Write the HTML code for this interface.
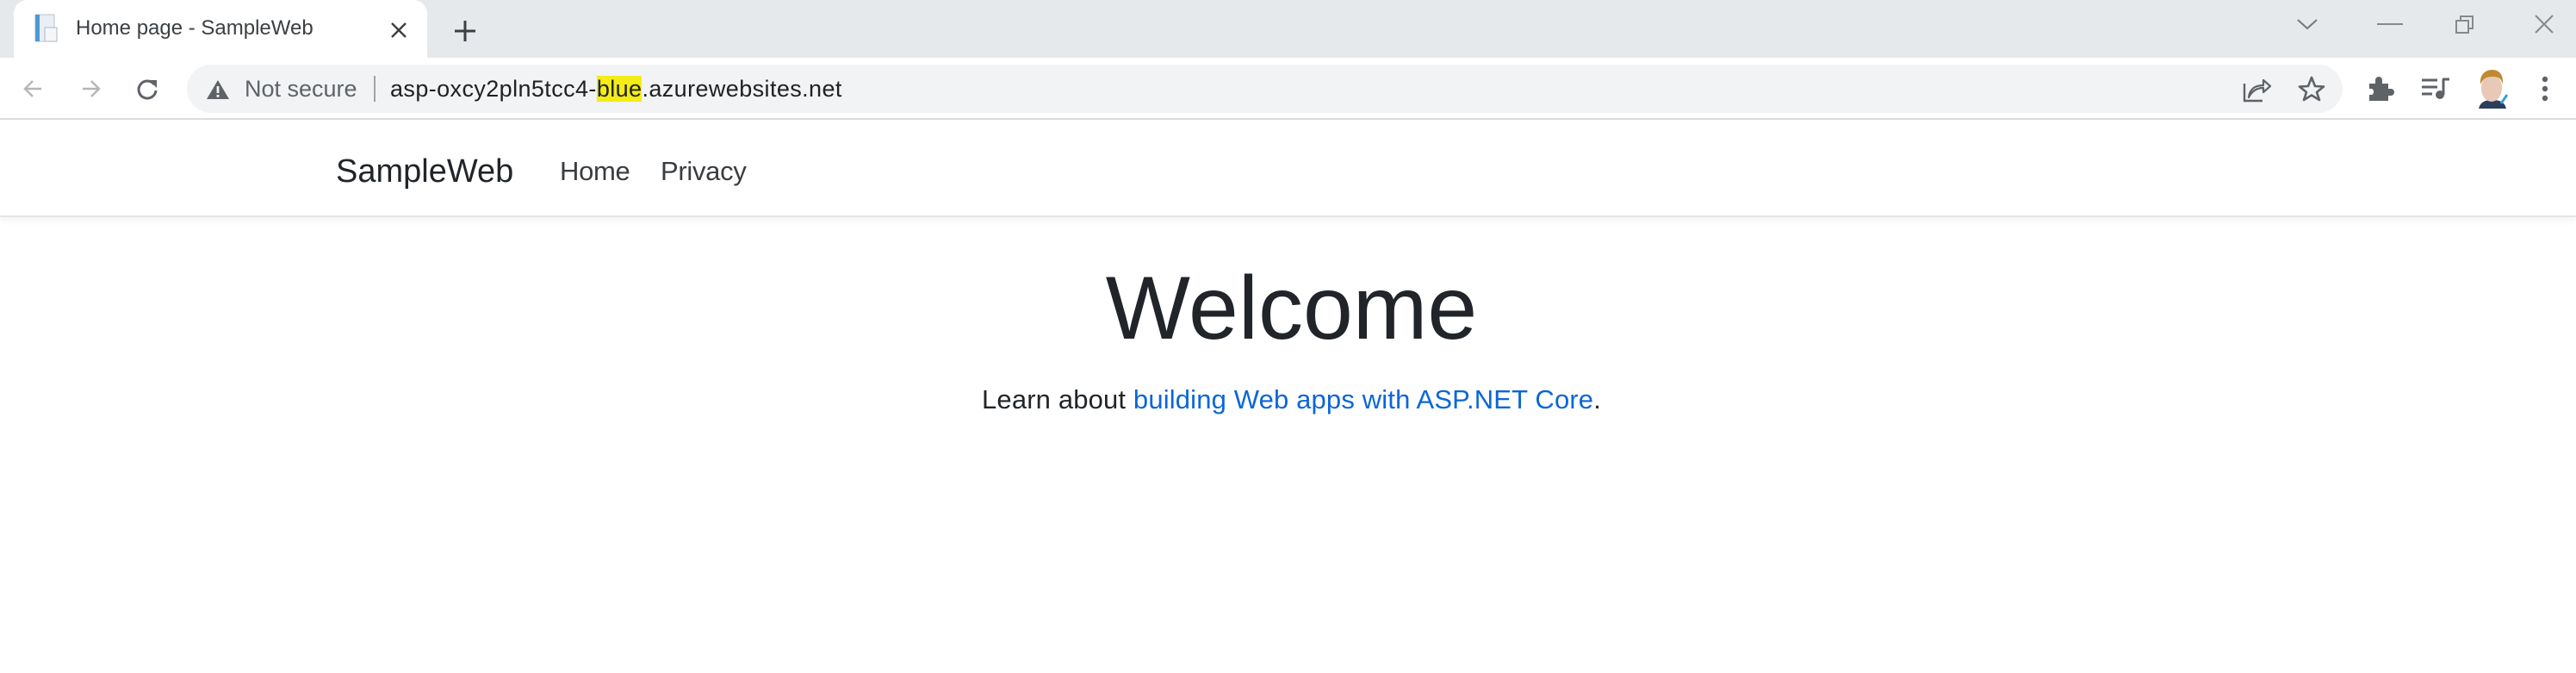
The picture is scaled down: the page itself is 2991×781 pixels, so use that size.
<!DOCTYPE html>
<html><head><meta charset="utf-8"><style>
*{margin:0;padding:0;box-sizing:border-box}
body{width:2991px;height:781px;background:#fff;font-family:"Liberation Sans",sans-serif;position:relative;overflow:hidden}
.abs{position:absolute}
.t{position:absolute;white-space:nowrap;line-height:1}
</style></head><body>
<!-- tab bar -->
<div class="abs" style="left:0;top:0;width:2991px;height:67px;background:#e6e9ec"></div>
<div class="abs" style="left:16px;top:0;width:480px;height:67px;background:#fff;border-radius:16px 16px 0 0"></div>
<svg class="abs" style="left:38px;top:16px" width="34" height="34" viewBox="0 0 34 34">
<rect x="3" y="1" width="22" height="31" fill="#e8eef4" stroke="#b8c4d0"/>
<rect x="3" y="1" width="5" height="31" fill="#4a9ad8"/>
<rect x="14" y="16" width="14" height="16" fill="#f4f6f8" stroke="#b0b8c0"/>
</svg>
<div class="t" style="left:88px;top:21px;font-size:24px;color:#3c4043">Home page - SampleWeb</div>
<svg class="abs" style="left:452px;top:24px" width="22" height="22" viewBox="0 0 22 22"><path d="M3 3L19 19M19 3L3 19" stroke="#3c4043" stroke-width="2.4"/></svg>
<svg class="abs" style="left:526px;top:22px" width="28" height="28" viewBox="0 0 28 28"><path d="M14 2V26M2 14H26" stroke="#3c4043" stroke-width="3"/></svg>
<svg class="abs" style="left:2666px;top:20px" width="26" height="16" viewBox="0 0 26 16"><path d="M2 3L13 13L24 3" fill="none" stroke="#777" stroke-width="2"/></svg>
<div class="abs" style="left:2760px;top:27px;width:30px;height:2px;background:#888"></div>
<svg class="abs" style="left:2850px;top:16px" width="26" height="24" viewBox="0 0 26 24"><rect x="2" y="8" width="14" height="14" fill="none" stroke="#888" stroke-width="2"/><path d="M7 8V3H21V17H16" fill="none" stroke="#888" stroke-width="2"/></svg>
<svg class="abs" style="left:2942px;top:17px" width="24" height="22" viewBox="0 0 24 22"><path d="M2 1L22 21M22 1L2 21" stroke="#888" stroke-width="2"/></svg>
<!-- toolbar -->
<div class="abs" style="left:0;top:67px;width:2991px;height:72px;background:#fff;border-bottom:2px solid #dadce0"></div>
<svg class="abs" style="left:26px;top:90px" width="26" height="26" viewBox="0 0 26 26"><path d="M22 13H4M12 4L3 13L12 22" fill="none" stroke="#b4b6b9" stroke-width="2.4"/></svg>
<svg class="abs" style="left:92px;top:90px" width="26" height="26" viewBox="0 0 26 26"><path d="M4 13H22M14 4L23 13L14 22" fill="none" stroke="#b4b6b9" stroke-width="2.4"/></svg>
<svg class="abs" style="left:156px;top:89px" width="30" height="30" viewBox="0 0 30 30"><path d="M23 9A10 10 0 1 0 25 16" fill="none" stroke="#5f6368" stroke-width="3"/><path d="M17 4H26V13Z" fill="#5f6368"/></svg>
<div class="abs" style="left:217px;top:75px;width:2503px;height:56px;background:#f1f3f4;border-radius:28px"></div>
<svg class="abs" style="left:239px;top:92px" width="28" height="24" viewBox="0 0 28 24"><path d="M14 1L27 23H1Z" fill="#5f6368"/><rect x="12.6" y="8" width="2.8" height="8" fill="#f1f3f4"/><rect x="12.6" y="18" width="2.8" height="2.8" fill="#f1f3f4"/></svg>
<div class="t" style="left:284px;top:90px;font-size:27px;color:#5f6368">Not secure</div>
<div class="abs" style="left:434px;top:88px;width:2px;height:30px;background:#a0a4a8"></div>
<div class="t" style="left:453px;top:90px;font-size:27px;color:#202124;letter-spacing:0.4px">asp-oxcy2pln5tcc4-<span style="background:#f4ec16">blue</span>.azurewebsites.net</div>
<svg class="abs" style="left:2604px;top:87px" width="34" height="32" viewBox="0 0 34 32"><path d="M2 10V30H23" fill="none" stroke="#5f6368" stroke-width="2.4"/><path d="M7 26C8 16 15 12 24 12V6L32 13L24 20V15C17 15 11 18 7 26Z" fill="none" stroke="#5f6368" stroke-width="2.2" stroke-linejoin="round"/></svg>
<svg class="abs" style="left:2668px;top:88px" width="32" height="30" viewBox="0 0 32 30"><path d="M16 2L20 12L30 12.5L22 19L25 28L16 22.5L7 28L10 19L2 12.5L12 12Z" fill="none" stroke="#5f6368" stroke-width="2.6" stroke-linejoin="round"/></svg>
<svg class="abs" style="left:2749px;top:88px" width="32" height="30" viewBox="0 0 32 30"><path d="M2 9H9V5A4 4 0 0 1 17 5V9H24V15H27A4 4 0 0 1 27 23H24V29H2V22H5A4 4 0 0 0 5 15H2Z" fill="#5f6368"/></svg>
<svg class="abs" style="left:2811px;top:90px" width="34" height="26" viewBox="0 0 34 26"><path d="M1 3H19M1 11H19M1 19H13" stroke="#5f6368" stroke-width="3"/><path d="M25 2H33" stroke="#5f6368" stroke-width="3"/><path d="M26 2V20" stroke="#5f6368" stroke-width="3"/><circle cx="22" cy="20" r="5" fill="#5f6368"/></svg>
<svg class="abs" style="left:2874px;top:80px" width="40" height="46" viewBox="0 0 40 46"><path d="M4 46C6 38 12 36 20 36C28 36 34 38 36 46Z" fill="#2d3e5a"/><ellipse cx="19" cy="22" rx="12" ry="16" fill="#e8c8b6"/><path d="M6 18C5 6 12 1 20 1C28 1 33 7 32 18C30 10 26 9 20 9C13 9 9 11 6 18Z" fill="#c08a30"/><path d="M30 40L37 30" stroke="#3aa0d8" stroke-width="3"/></svg>
<svg class="abs" style="left:2948px;top:88px" width="14" height="32" viewBox="0 0 14 32"><circle cx="7" cy="4" r="3.2" fill="#5f6368"/><circle cx="7" cy="15" r="3.2" fill="#5f6368"/><circle cx="7" cy="26" r="3.2" fill="#5f6368"/></svg>
<!-- page navbar -->
<div class="abs" style="left:0;top:141px;width:2991px;height:111px;background:#fff;border-bottom:2px solid #e5e5e5;box-shadow:0 4px 8px rgba(0,0,0,0.05)"></div>
<div class="t" style="left:390px;top:180px;font-size:38px;color:#212529">SampleWeb</div>
<div class="t" style="left:650px;top:183px;font-size:31px;color:#3a3d40;letter-spacing:-0.3px">Home</div>
<div class="t" style="left:767px;top:183px;font-size:31px;color:#3a3d40;letter-spacing:-0.3px">Privacy</div>
<!-- content -->
<div class="t" style="left:0;width:2991px;text-align:center;top:306px;font-size:104px;color:#212529;padding-left:8px">Welcome</div>
<div class="t" style="left:0;width:2991px;text-align:center;top:448px;font-size:31px;color:#212529;letter-spacing:0.15px;padding-left:8px">Learn about <span style="color:#0b66d8">building Web apps with ASP.NET Core</span>.</div>
</body></html>
